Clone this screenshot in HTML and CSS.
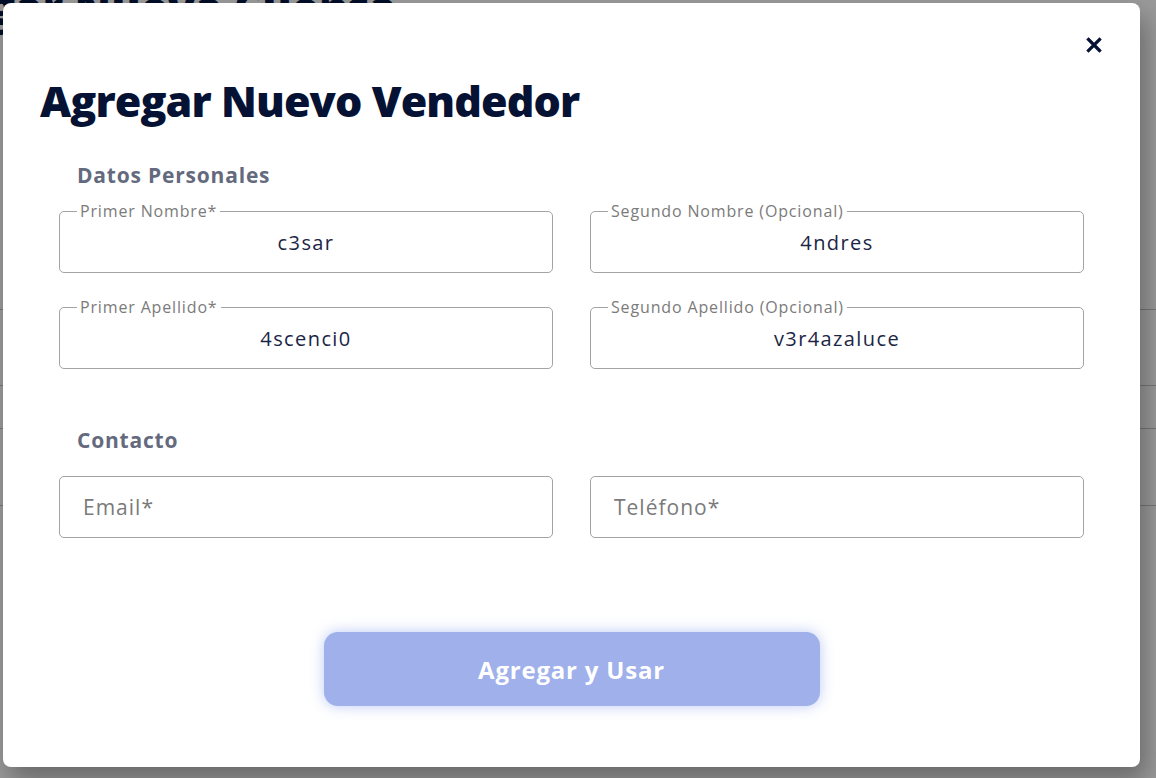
FILE: index.html
```html
<!DOCTYPE html>
<html lang="es">
<head>
<meta charset="utf-8">
<title>Agregar Nuevo Vendedor</title>
<link rel="stylesheet" href="styles.css">
</head>
<body>
<div class="page">
  <h1 class="page-title">Agregar Nueva Cuenta</h1>
  <div class="page-rows">
    <div class="page-row r1"></div>
    <div class="page-row r2"></div>
    <div class="page-row r3"></div>
    <div class="page-row r4"></div>
  </div>
</div>
<div class="modal" role="dialog" aria-labelledby="mtitle">
  <button class="close" aria-label="Cerrar">
    <svg width="16" height="16" viewBox="0 0 16 16"><path d="M2.5 2.5 L13.5 13.5 M13.5 2.5 L2.5 13.5" stroke="#061233" stroke-width="3.2" stroke-linecap="square"/></svg>
  </button>
  <h2 class="title" id="mtitle">Agregar Nuevo Vendedor</h2>
  <form class="form">
    <h3 class="section">Datos Personales</h3>
    <div class="grid">
      <div class="field"><span class="label">Primer Nombre*</span><span class="value">c3sar</span></div>
      <div class="field"><span class="label">Segundo Nombre (Opcional)</span><span class="value">4ndres</span></div>
      <div class="field"><span class="label">Primer Apellido*</span><span class="value">4scenci0</span></div>
      <div class="field"><span class="label">Segundo Apellido (Opcional)</span><span class="value">v3r4azaluce</span></div>
    </div>
    <h3 class="section contact">Contacto</h3>
    <div class="grid">
      <div class="field empty"><span class="placeholder">Email*</span></div>
      <div class="field empty"><span class="placeholder">Teléfono*</span></div>
    </div>
    <div class="actions">
      <button type="button" class="submit">Agregar y Usar</button>
    </div>
  </form>
</div>
</body>
</html>
```
FILE: styles.css
```css
* { box-sizing: border-box; }
html, body { margin: 0; padding: 0; }
body {
  width: 1156px;
  height: 778px;
  overflow: hidden;
  background: #999999;
  font-family: "Open Sans", "Liberation Sans", sans-serif;
  position: relative;
}
.page { display: flow-root; }
.page-title {
  margin: -15px 0 0 -118px;
  font-size: 44px;
  line-height: 44px;
  font-weight: 800;
  color: #020d28;
  white-space: nowrap;
}
.page-rows { margin-top: 280px; }
.page-row { border-bottom: 1px solid #767676; }
.r1 { height: 0; }
.r2 { height: 76px; }
.r3 { height: 43px; }
.r4 { height: 77px; }

.modal {
  position: absolute;
  left: 3px;
  top: 3px;
  width: 1137px;
  height: 764px;
  background: #fff;
  border-radius: 8px;
  box-shadow: 6px 14px 24px rgba(0,0,0,0.3);
  z-index: 3;
}
.close {
  position: absolute;
  right: 36px;
  top: 32px;
  width: 20px;
  height: 20px;
  padding: 2px;
  border: 0;
  background: none;
  display: flex;
  align-items: center;
  justify-content: center;
}
.title {
  margin: 72px 0 0 37px;
  font-size: 43px;
  line-height: 52px;
  font-weight: 800;
  color: #061233;
  letter-spacing: -0.9px;
}
.form { padding: 0 56px; }
.section {
  margin: 36px 0 24px 18px;
  font-size: 21px;
  line-height: 24px;
  font-weight: 700;
  color: #646a7e;
  letter-spacing: 0.8px;
}
.section.contact { margin-top: 59px; }
.grid {
  display: grid;
  grid-template-columns: 494px 494px;
  column-gap: 37px;
  row-gap: 34px;
}
.field {
  position: relative;
  height: 62px;
  border: 1px solid #a3a3a3;
  border-radius: 5px;
  display: flex;
  align-items: center;
  justify-content: center;
}
.field.empty { justify-content: flex-start; padding-left: 23px; }
.label {
  position: absolute;
  left: 17px;
  top: -10px;
  padding: 0 3px;
  background: #fff;
  font-size: 16px;
  line-height: 18px;
  color: #7b7b7b;
  letter-spacing: 0.85px;
}
.value {
  font-size: 20px;
  color: #1b2545;
  letter-spacing: 1.4px;
}
.placeholder {
  font-size: 21px;
  color: #7a7a7a;
  letter-spacing: 1px;
}
.actions {
  display: flex;
  justify-content: center;
  margin-top: 94px;
}
.submit {
  width: 496px;
  height: 74px;
  border: 0;
  border-radius: 14px;
  background: #9fb0ea;
  color: #fff;
  font-family: inherit;
  font-size: 24px;
  font-weight: 700;
  letter-spacing: 0.8px;
  box-shadow: 0 0 14px rgba(110, 140, 235, 0.45);
}
```
